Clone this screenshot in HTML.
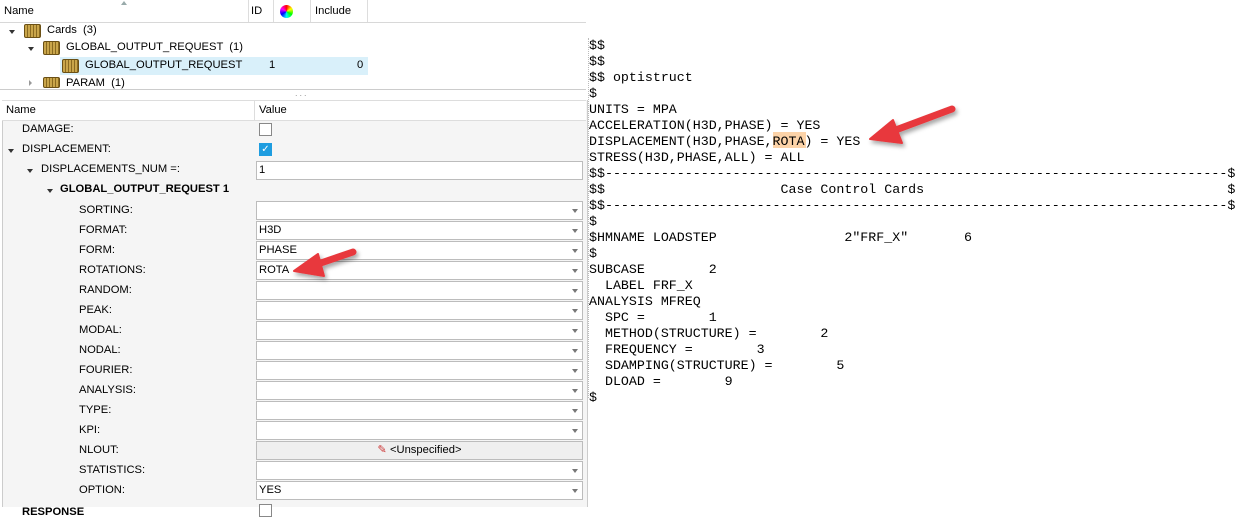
<!DOCTYPE html>
<html><head><style>
body{margin:0;width:1248px;height:507px;overflow:hidden;background:#fff;font-family:"Liberation Sans",sans-serif;font-size:11.2px;color:#000;position:relative}
.a{position:absolute;white-space:nowrap}
.dd{position:absolute;left:256px;width:323px;height:17px;border:1px solid #bcbcbc;background:#fff;line-height:17px;padding-left:2px;box-sizing:content-box}
.dd::after{content:"";position:absolute;right:4px;top:7px;border-left:3px solid transparent;border-right:3px solid transparent;border-top:4px solid #777}
.dd.n::after{display:none}
.lbl{position:absolute;left:79px;line-height:14px}
.tri{position:absolute;width:0;height:0;border-left:3px solid transparent;border-right:3px solid transparent;border-top:4px solid #333}
.ic{position:absolute;width:15px;height:12px;background:repeating-linear-gradient(90deg,#c9a54a 0 2px,#8a6a20 2px 3px);border:1px solid #6b5015;border-radius:2px}
pre{margin:0;font-family:"Liberation Mono",monospace;font-size:13.3px;line-height:16px;position:absolute;left:589px;top:38px}
</style></head><body>
<div class="a" style="left:0;top:0;width:586px;height:22px;border-bottom:1px solid #d8d8d8"></div>
<div class="a" style="left:4px;top:5px">Name</div>
<div class="a" style="left:121px;top:1px;border-left:3px solid transparent;border-right:3px solid transparent;border-bottom:4px solid #9aa"></div>
<div class="a" style="left:248px;top:0;width:1px;height:22px;background:#ddd"></div>
<div class="a" style="left:251px;top:5px">ID</div>
<div class="a" style="left:273px;top:0;width:1px;height:22px;background:#ddd"></div>
<div class="a" style="left:280px;top:5px;width:13px;height:13px;border-radius:50%;background:conic-gradient(red,yellow,lime,cyan,blue,magenta,red)"></div>
<div class="a" style="left:310px;top:0;width:1px;height:22px;background:#ddd"></div>
<div class="a" style="left:315px;top:5px">Include</div>
<div class="a" style="left:367px;top:0;width:1px;height:22px;background:#ddd"></div>
<div class="tri" style="left:9px;top:30px"></div><div class="ic" style="left:24px;top:24px"></div><div class="a" style="left:47px;top:24px">Cards &nbsp;(3)</div>
<div class="tri" style="left:28px;top:47px"></div><div class="ic" style="left:43px;top:41px"></div><div class="a" style="left:66px;top:41px">GLOBAL_OUTPUT_REQUEST &nbsp;(1)</div>
<div class="a" style="left:60px;top:57px;width:308px;height:18px;background:#d9f0fa"></div>
<div class="ic" style="left:62px;top:59px"></div><div class="a" style="left:85px;top:59px">GLOBAL_OUTPUT_REQUEST</div>
<div class="a" style="left:269px;top:59px">1</div><div class="a" style="left:357px;top:59px">0</div>
<div class="a" style="left:29px;top:80px;border-top:3px solid transparent;border-bottom:3px solid transparent;border-left:3px solid #999"></div>
<div class="ic" style="left:43px;top:77px;height:9px"></div><div class="a" style="left:66px;top:77px;height:12px;overflow:hidden">PARAM &nbsp;(1)</div>
<div class="a" style="left:0;top:89px;width:586px;height:10px;background:#fff;border-top:1px solid #ccc"></div>
<div class="a" style="left:295px;top:88px;color:#999;font-size:9px;letter-spacing:2px">...</div>
<div class="a" style="left:2px;top:100px;width:584px;height:407px;background:#f5f5f5;border-left:1px solid #ccc;border-right:1px solid #ccc"></div>
<div class="a" style="left:2px;top:100px;width:584px;height:19px;background:#fff;border-bottom:1px solid #ddd;border-top:1px solid #ddd"></div>
<div class="a" style="left:254px;top:100px;width:1px;height:20px;background:#ddd"></div>
<div class="a" style="left:6px;top:104px">Name</div><div class="a" style="left:259px;top:104px">Value</div>
<div class="a" style="left:22px;top:123px">DAMAGE:</div>
<div class="a" style="left:259px;top:123px;width:11px;height:11px;border:1px solid #888;background:#fff"></div>
<div class="tri" style="left:8px;top:149px"></div><div class="a" style="left:22px;top:143px">DISPLACEMENT:</div>
<div class="a" style="left:259px;top:143px;width:13px;height:13px;background:#1e9de0;color:#fff;font-size:10px;line-height:13px;text-align:center">✓</div>
<div class="tri" style="left:27px;top:169px"></div><div class="a" style="left:41px;top:163px">DISPLACEMENTS_NUM =:</div>
<div class="dd n" style="top:161px">1</div>
<div class="tri" style="left:47px;top:189px"></div><div class="a" style="left:60px;top:183px;font-weight:bold">GLOBAL_OUTPUT_REQUEST 1</div>
<div class="lbl" style="top:203px">SORTING:</div><div class="dd" style="top:201px"></div>
<div class="lbl" style="top:223px">FORMAT:</div><div class="dd" style="top:221px">H3D</div>
<div class="lbl" style="top:243px">FORM:</div><div class="dd" style="top:241px">PHASE</div>
<div class="lbl" style="top:263px">ROTATIONS:</div><div class="dd" style="top:261px">ROTA</div>
<div class="lbl" style="top:283px">RANDOM:</div><div class="dd" style="top:281px"></div>
<div class="lbl" style="top:303px">PEAK:</div><div class="dd" style="top:301px"></div>
<div class="lbl" style="top:323px">MODAL:</div><div class="dd" style="top:321px"></div>
<div class="lbl" style="top:343px">NODAL:</div><div class="dd" style="top:341px"></div>
<div class="lbl" style="top:363px">FOURIER:</div><div class="dd" style="top:361px"></div>
<div class="lbl" style="top:383px">ANALYSIS:</div><div class="dd" style="top:381px"></div>
<div class="lbl" style="top:403px">TYPE:</div><div class="dd" style="top:401px"></div>
<div class="lbl" style="top:423px">KPI:</div><div class="dd" style="top:421px"></div>
<div class="lbl" style="top:443px">NLOUT:</div><div class="dd n" style="top:441px;background:#efefef;text-align:center;padding-left:0;width:325px"><span style="color:#c33">✎</span> &lt;Unspecified&gt;</div>
<div class="lbl" style="top:463px">STATISTICS:</div><div class="dd" style="top:461px"></div>
<div class="lbl" style="top:483px">OPTION:</div><div class="dd" style="top:481px">YES</div>
<div class="a" style="left:22px;top:506px;font-weight:bold">RESPONSE</div>
<div class="a" style="left:259px;top:504px;width:11px;height:11px;border:1px solid #888;background:#fff"></div>
<div class="a" style="left:588px;top:38px;width:1px;height:360px;border-left:1px dotted #bbb"></div>
<div class="a" style="left:773px;top:132px;width:33px;height:16px;background:#fcd3a8"></div>
<pre>$$
$$
$$ optistruct
$
UNITS = MPA
ACCELERATION(H3D,PHASE) = YES
DISPLACEMENT(H3D,PHASE,ROTA) = YES
STRESS(H3D,PHASE,ALL) = ALL
$$------------------------------------------------------------------------------$
$$                      Case Control Cards                                      $
$$------------------------------------------------------------------------------$
$
$HMNAME LOADSTEP                2"FRF_X"       6
$
SUBCASE        2
  LABEL FRF_X
ANALYSIS MFREQ
  SPC =        1
  METHOD(STRUCTURE) =        2
  FREQUENCY =        3
  SDAMPING(STRUCTURE) =        5
  DLOAD =        9
$</pre>
<svg class="a" style="left:0;top:0" width="1248" height="507">
<defs><filter id="s"><feDropShadow dx="2" dy="3" stdDeviation="2" flood-opacity="0.35"/></filter></defs>
<g fill="#e8393e" stroke="#e8393e" filter="url(#s)">
<line x1="353" y1="252" x2="315" y2="265" stroke-width="7" stroke-linecap="round"/>
<polygon points="294,271 318,254 324,276" stroke-width="2" stroke-linejoin="round"/>
<line x1="952" y1="109" x2="893" y2="131" stroke-width="7" stroke-linecap="round"/>
<polygon points="870,139 893,120 902,143" stroke-width="2" stroke-linejoin="round"/>
</g></svg>
</body></html>
